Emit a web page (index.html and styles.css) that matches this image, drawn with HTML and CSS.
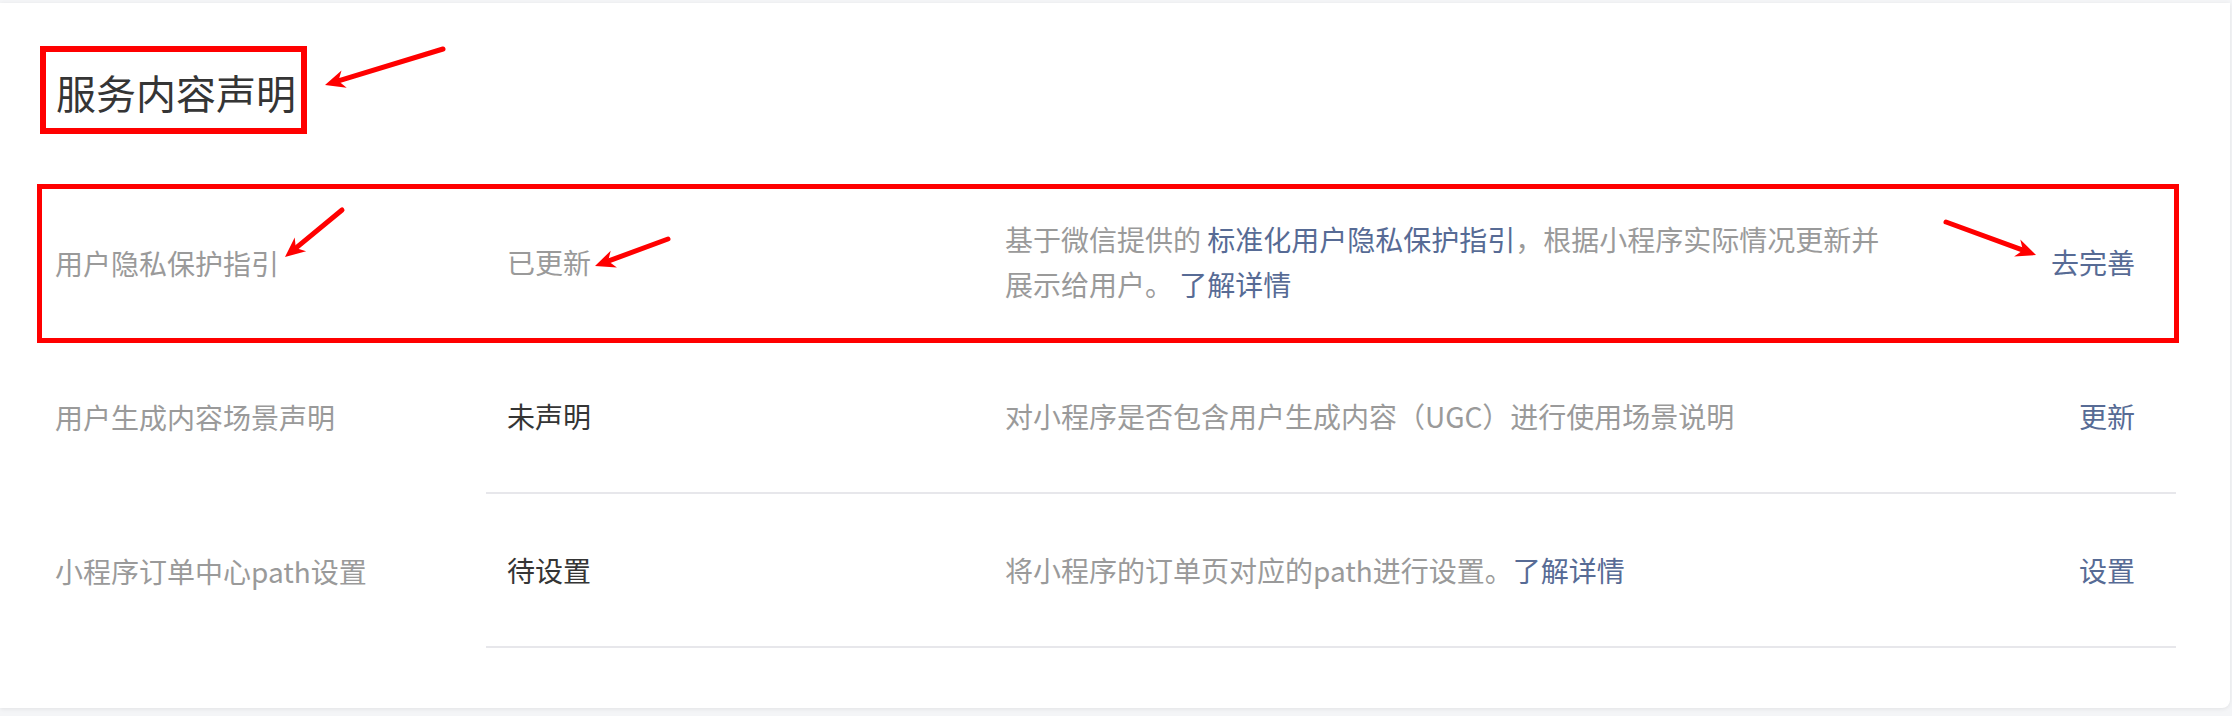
FILE: index.html
```html
<!DOCTYPE html>
<html lang="zh-CN">
<head>
    <meta charset="UTF-8">
    <meta name="viewport" content="width=device-width, initial-scale=1.0">
    <title>服务内容声明</title>
    <link rel="stylesheet" href="styles.css">
</head>
<body>
    <div class="page">
        <section class="card">
            <h2 class="card-title">服务内容声明</h2>
            <div class="decl-list">
                <div class="decl-row">
                    <div class="decl-label">用户隐私保护指引</div>
                    <div class="decl-body">
                        <div class="decl-status">已更新</div>
                        <div class="decl-desc">基于微信提供的 <a href="#">标准化用户隐私保护指引</a>，根据小程序实际情况更新并展示给用户。 <a href="#">了解详情</a></div>
                        <div class="decl-action"><a href="#">去完善</a></div>
                    </div>
                </div>
                <div class="decl-row">
                    <div class="decl-label">用户生成内容场景声明</div>
                    <div class="decl-body">
                        <div class="decl-status done">未声明</div>
                        <div class="decl-desc">对小程序是否包含用户生成内容（UGC）进行使用场景说明</div>
                        <div class="decl-action"><a href="#">更新</a></div>
                    </div>
                </div>
                <div class="decl-row">
                    <div class="decl-label">小程序订单中心path设置</div>
                    <div class="decl-body">
                        <div class="decl-status done">待设置</div>
                        <div class="decl-desc">将小程序的订单页对应的path进行设置。<a href="#">了解详情</a></div>
                        <div class="decl-action"><a href="#">设置</a></div>
                    </div>
                </div>
            </div>
        </section>

        <!-- red markup drawn on top of the card -->
        <svg class="marks" width="2232" height="716" viewBox="0 0 2232 716">
            <g fill="none" stroke="#ff0000">
                <rect x="43" y="49" width="261" height="82" stroke-width="6"/>
                <rect x="39.5" y="186.5" width="2137" height="154" stroke-width="5"/>
            </g>
            <g stroke="#ff0000" stroke-width="5" stroke-linecap="round">
                <line x1="443" y1="49" x2="338.4" y2="80.9"/>
                <line x1="342" y1="210" x2="295.8" y2="248.1"/>
                <line x1="668" y1="239" x2="608.1" y2="261.1"/>
                <line x1="1946" y1="222" x2="2022.9" y2="250.2"/>
            </g>
            <g fill="#ff0000">
                <polygon points="325,85 341.5,70.6 338.4,80.9 346.7,87.8"/>
                <polygon points="285,257 294.7,237.4 295.8,248.1 306.1,251.2"/>
                <polygon points="595,266 610.7,250.7 608.1,261.1 616.9,267.5"/>
                <polygon points="2036,255 2014.1,256.6 2022.9,250.2 2020.3,239.6"/>
            </g>
        </svg>
    </div>
</body>
</html>
```

FILE: styles.css
```css
body {
    margin: 0;
    background: #f4f5f7;
    font-family: "Noto Sans CJK SC", "Noto Sans", sans-serif;
    color: #353535;
}
.page {
    position: relative;
    width: 2232px;
    height: 716px;
    overflow: hidden;
}
.card {
    margin-top: 3px;
    width: 2230px;
    box-sizing: border-box;
    padding: 61px 54px 60px 55px;
    background: #fff;
    border-radius: 0 0 8px 0;
    box-shadow: 0 1px 4px rgba(0, 0, 0, 0.08);
}
.card-title {
    margin: 0 0 66px 1px;
    font-size: 40px;
    font-weight: normal;
    line-height: 56px;
    color: #353535;
}
.decl-row {
    display: flex;
    align-items: center;
    font-size: 28px;
    line-height: 1.6;
}
.decl-label {
    width: 431px;
    flex-shrink: 0;
    color: #9a9a9a;
}
.decl-body {
    flex: 1;
    display: flex;
    align-items: center;
    height: 152px;
    border-bottom: 2px solid #e7e7eb;
}
.decl-status {
    width: 498px;
    padding-left: 21px;
    flex-shrink: 0;
    color: #9a9a9a;
}
.decl-status.done {
    color: #353535;
}
.decl-desc {
    width: 880px;
    color: #9a9a9a;
}
.decl-action {
    margin-left: auto;
    padding-right: 41px;
}
a {
    color: #576b95;
    text-decoration: none;
}
.marks {
    position: absolute;
    left: 0;
    top: 0;
    pointer-events: none;
}
```
